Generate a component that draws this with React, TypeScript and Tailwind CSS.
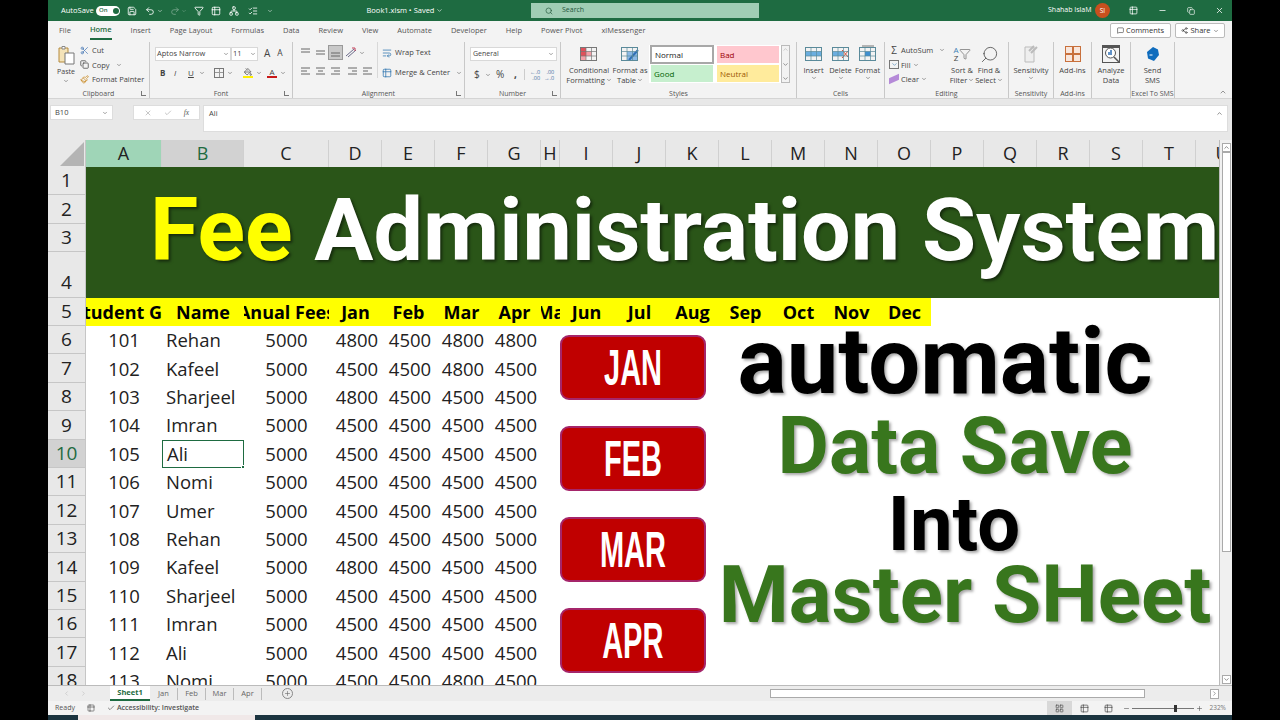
import { ReactNode } from 'react';
import {
  ChevronDown, ChevronLeft, ChevronRight, ChevronUp, Check, Copy, Filter, LayoutGrid, ListChecks, MessageSquare,
  Minus, Network, PaintBucket, Paintbrush, Plus, Redo2, Save, Scissors, Search, Share2, Table2, Undo2, WrapText, X,
} from 'lucide-react';

const columns = [
  ['A', 'w-[76px]'], ['B', 'w-[82px]'], ['C', 'w-[85px]'], ['D', 'w-[53px]'], ['E', 'w-[53px]'], ['F', 'w-[53px]'],
  ['G', 'w-[53px]'], ['H', 'w-[19px]'], ['I', 'w-[53px]'], ['J', 'w-[53px]'], ['K', 'w-[53px]'], ['L', 'w-[53px]'],
  ['M', 'w-[53px]'], ['N', 'w-[53px]'], ['O', 'w-[53px]'], ['P', 'w-[53px]'], ['Q', 'w-[53px]'], ['R', 'w-[53px]'],
  ['S', 'w-[53px]'], ['T', 'w-[53px]'], ['U', 'w-[53px]'],
];

const headings = [
  ['Name', 'w-[82px]'], ['Anual Fees', 'w-[85px]'], ['Jan', 'w-[53px]'], ['Feb', 'w-[53px]'],
  ['Mar', 'w-[53px]'], ['Apr', 'w-[53px]'], ['Ma', 'w-[19px]'], ['Jun', 'w-[53px]'], ['Jul', 'w-[53px]'], ['Aug', 'w-[53px]'],
  ['Sep', 'w-[53px]'], ['Oct', 'w-[53px]'], ['Nov', 'w-[53px]'], ['Dec', 'w-[53px]'],
];

const students: [number, string, number[]][] = [
  [101, 'Rehan', [4800, 4500, 4800, 4800]],
  [102, 'Kafeel', [4500, 4500, 4800, 4500]],
  [103, 'Sharjeel', [4800, 4500, 4500, 4500]],
  [104, 'Imran', [4500, 4500, 4500, 4500]],
  [105, 'Ali', [4500, 4500, 4500, 4500]],
  [106, 'Nomi', [4500, 4500, 4500, 4500]],
  [107, 'Umer', [4500, 4500, 4500, 4500]],
  [108, 'Rehan', [4500, 4500, 4500, 5000]],
  [109, 'Kafeel', [4800, 4500, 4500, 4500]],
  [110, 'Sharjeel', [4500, 4500, 4500, 4500]],
  [111, 'Imran', [4500, 4500, 4500, 4500]],
  [112, 'Ali', [4500, 4500, 4500, 4500]],
  [113, 'Nomi', [4500, 4500, 4800, 4500]],
];

const tabs = ['File', 'Home', 'Insert', 'Page Layout', 'Formulas', 'Data', 'Review', 'View', 'Automate', 'Developer', 'Help', 'Power Pivot', 'xlMessenger'];

// Three stacked lines, the way Excel draws its alignment buttons
const Lines = ({ rows }: { rows: [number, number, number][] }) => (
  <svg width="11" height="11" viewBox="0 0 11 11" stroke="#666" strokeWidth="1">
    {rows.map(([x1, x2, y]) => <line key={y} x1={x1} x2={x2} y1={y} y2={y} />)}
  </svg>
);

// Small spreadsheet grid used by the ribbon's big buttons
const GridIcon = ({ children, stroke = '#777' }: { children?: ReactNode; stroke?: string }) => (
  <svg width="20" height="18" viewBox="0 0 20 18" fill="none">
    {children}
    <rect x="1.5" y="2.5" width="16" height="13" stroke={stroke} />
    <path d="M1.5 6.5h16M1.5 11h16M7 2.5v13M12.5 2.5v13" stroke={stroke} strokeWidth="0.7" />
  </svg>
);

const Group = ({ label, width, launcher, children }: { label: string; width: string; launcher?: boolean; children: ReactNode }) => (
  <div className={`${width} h-[56px] shrink-0 flex flex-col border-r border-[#c8c8c8]`}>
    <div className="h-[47px] flex">{children}</div>
    <div className="h-[9px] flex items-center relative">
      <span className="flex-1 text-center text-[7px] leading-none text-[#555] whitespace-nowrap">{label}</span>
      {launcher && <span className="absolute right-[3px] top-[2px] w-[5px] h-[5px] border-l border-b border-[#777]" />}
    </div>
  </div>
);

const Big = ({ icon, lines }: { icon: ReactNode; lines: string[] }) => (
  <div className="flex flex-col items-center flex-1 text-[7.5px] leading-[10px] text-[#444]">
    <div className="h-[22px] flex items-center justify-center">{icon}</div>
    {lines.map((l) => <span key={l} className="whitespace-nowrap flex items-center gap-[1px]">{l === 'v' ? <ChevronDown size={6} /> : l.endsWith(' v') ? <>{l.slice(0, -2)} <ChevronDown size={6} /></> : l}</span>)}
  </div>
);

const Cell = ({ className, children }: { className: string; children: ReactNode }) => (
  <div className={`${className} shrink-0 h-full flex items-center justify-center overflow-hidden whitespace-nowrap`}>{children}</div>
);

const RowNum = ({ n, active }: { n: number; active?: boolean }) => (
  <div className={`w-[38px] shrink-0 h-full flex items-center justify-center border-b border-r border-[#c6c6c6] text-[19px] ${active ? 'bg-[#d2d2d2] text-[#1f6b41]' : 'bg-[#e8e8e8] text-[#222]'}`}>{n}</div>
);

const MonthButton = ({ label }: { label: string }) => (
  <div className="w-[146px] h-[65px] rounded-[9px] bg-[#c00000] border-2 border-[#a5256a] flex items-center justify-center">
    <span className="font-['Liberation_Sans',sans-serif] font-bold text-white text-[50px] leading-none scale-x-[0.58]">{label}</span>
  </div>
);

export default function App() {
  return (
    <div className="w-[1280px] h-[720px] overflow-hidden bg-black flex font-['Open_Sans',sans-serif]">
      <div className="w-[48px] shrink-0" />
      <div className="w-[1184px] shrink-0 flex flex-col">
        {/* Title bar */}
        <div className="h-[21px] shrink-0 bg-[#1e6b41] flex items-center text-white text-[7.5px]">
          <span className="ml-[13px] w-[32px] whitespace-nowrap">AutoSave</span>
          <span className="ml-[3px] w-[24px] h-[10px] rounded-full bg-white text-[#1e6b41] text-[6px] font-semibold flex items-center justify-between pl-[3px] pr-[1px]">On<span className="w-[6px] h-[6px] rounded-full bg-[#1e6b41]" /></span>
          <Save size={10} className="ml-[7px]" />
          <Undo2 size={10} className="ml-[8px]" />
          <ChevronDown size={6} className="ml-[2px]" />
          <Redo2 size={10} className="ml-[7px] opacity-40" />
          <ChevronDown size={6} className="ml-[1px] opacity-40" />
          <Filter size={10} className="ml-[7px]" />
          <Table2 size={10} className="ml-[7px]" />
          <Network size={10} className="ml-[8px]" />
          <ListChecks size={10} className="ml-[9px]" />
          <ChevronDown size={6} className="ml-[9px]" />
          <span className="ml-[82px] w-[100px] shrink-0 text-center whitespace-nowrap flex items-center justify-center gap-[2px]">Book1.xlsm • Saved <ChevronDown size={7} /></span>
          <div className="ml-[76px] w-[228px] shrink-0 h-[15px] bg-[#a0cdb4] text-[#23573b] flex items-center pl-[14px] gap-[9px] text-[7px]">
            <Search size={8} /> Search
          </div>
          <span className="ml-[289px] w-[42px] shrink-0 whitespace-nowrap text-[7px]">Shahab IslaM</span>
          <span className="ml-[5px] w-[15px] h-[15px] shrink-0 rounded-full bg-[#c8501e] flex items-center justify-center text-[6.5px]">SI</span>
          <div className="ml-[19px] flex items-center gap-[20px]">
            <Table2 size={9} />
            <Minus size={9} />
            <Copy size={8} />
            <X size={9} />
          </div>
        </div>

        {/* Ribbon tabs */}
        <div className="h-[19px] shrink-0 bg-[#f3f3f3] flex items-center text-[7.5px] text-[#555] pl-[11px] gap-[19px]">
          {tabs.map((t) => (
            <span key={t} className={`whitespace-nowrap h-full flex items-center ${t === 'Home' ? 'text-[#1e6b41] font-semibold border-b-2 border-[#1e6b41]' : ''}`}>{t}</span>
          ))}
          <div className="ml-auto mr-[7px] flex items-center gap-[4px] text-[#333]">
            <span className="w-[61px] h-[15px] bg-white border border-[#bbb] rounded-[2px] flex items-center justify-center gap-[2px]"><MessageSquare size={7} /> Comments</span>
            <span className="w-[50px] h-[15px] bg-white border border-[#bbb] rounded-[2px] flex items-center justify-center gap-[2px]"><Share2 size={7} /> Share <ChevronDown size={6} /></span>
          </div>
        </div>

        {/* Ribbon */}
        <div className="h-[59px] shrink-0 bg-[#f3f3f3] flex pt-[2px] text-[#444] border-b border-[#d4d4d4]">
          <Group label="Clipboard" width="w-[102px]" launcher>
            <div className="w-[30px] pl-[6px] flex flex-col items-center text-[7px] leading-[9px] pt-[3px]">
              <svg width="18" height="20" viewBox="0 0 18 20" fill="none">
                <path d="M2 3h9v14H2z" fill="#f4e3b8" stroke="#b58a3c" />
                <path d="M5 1.5h3v2.5H5z" fill="#fff" stroke="#888" />
                <path d="M8 8h9v11H8z" fill="#fff" stroke="#777" />
              </svg>
              <span className="mt-[2px]">Paste</span>
              <ChevronDown size={6} className="mt-[2px]" />
            </div>
            <div className="ml-[2px] flex flex-col text-[7.5px] leading-[14.5px] pt-[1px]">
              <span className="flex items-center gap-[3px]"><Scissors size={9} className="text-[#4a7ab5]" /> Cut</span>
              <span className="flex items-center gap-[3px]"><Copy size={9} /> Copy <ChevronDown size={6} className="ml-[3px]" /></span>
              <span className="flex items-center gap-[3px] whitespace-nowrap"><Paintbrush size={9} className="text-[#c8871e]" /> Format Painter</span>
            </div>
          </Group>

          <Group label="Font" width="w-[143px]" launcher>
            <div className="pl-[5px] flex flex-col gap-[6px] pt-[5px] text-[7.5px]">
              <div className="flex items-center h-[13px]">
                <span className="w-[76px] h-[14px] bg-white border border-[#d8d8d8] flex items-center justify-between px-[1px] whitespace-nowrap">Aptos Narrow <ChevronDown size={6} /></span>
                <span className="w-[27px] h-[14px] bg-white border border-[#d8d8d8] flex items-center justify-between px-[1px]">11 <ChevronDown size={6} /></span>
                <span className="ml-[6px] text-[10px]">A</span>
                <span className="ml-[7px] text-[8.5px]">A</span>
              </div>
              <div className="flex items-center h-[13px] text-[8px]">
                <b className="ml-[5px] w-[7px]">B</b>
                <i className="ml-[7px] w-[7px]">I</i>
                <u className="ml-[7px] w-[7px]">U</u>
                <ChevronDown size={6} className="ml-[4px]" />
                <span className="ml-[9px] w-[10px] h-[10px] border border-[#777] relative">
                  <span className="absolute left-[3.5px] top-0 bottom-0 w-[1px] bg-[#999]" />
                  <span className="absolute top-[3.5px] left-0 right-0 h-[1px] bg-[#999]" />
                </span>
                <ChevronDown size={6} className="ml-[3px]" />
                <span className="ml-[10px] flex flex-col items-center"><PaintBucket size={8} /><span className="w-[10px] h-[2px] bg-[#ffef00]" /></span>
                <ChevronDown size={6} className="ml-[3px]" />
                <span className="ml-[5px] w-[10px] flex flex-col items-center leading-[8px]">A<span className="w-[10px] h-[2px] bg-[#c81818]" /></span>
                <ChevronDown size={6} className="ml-[3px]" />
              </div>
            </div>
          </Group>

          <Group label="Alignment" width="w-[172px]" launcher>
            <div className="w-[85px] pl-[5px] flex flex-col gap-[5px] pt-[3px] border-r border-[#d8d8d8] h-[36px]">
              <div className="flex items-center h-[15px]">
                <span className="w-[15px] flex justify-center"><Lines rows={[[1, 10, 2], [1, 10, 5]]} /></span>
                <span className="w-[15px] flex justify-center"><Lines rows={[[1, 10, 4], [1, 10, 7]]} /></span>
                <span className="w-[15px] h-[15px] bg-[#c8c8c8] border border-[#999] flex items-center justify-center"><Lines rows={[[1, 10, 6], [1, 10, 9]]} /></span>
                <span className="ml-[2px] flex items-center gap-[2px]">
                  <svg width="12" height="11" viewBox="0 0 12 11" fill="none" stroke="#6b6b8a"><path d="M1 9 9 2M3 10l8-7" /><path d="M7 1h3v3" stroke="#c2405a" /></svg>
                  <ChevronDown size={6} />
                </span>
              </div>
              <div className="flex items-center h-[15px]">
                <span className="w-[15px] flex justify-center"><Lines rows={[[1, 10, 2], [1, 7, 5], [1, 10, 8]]} /></span>
                <span className="w-[15px] flex justify-center"><Lines rows={[[1, 10, 2], [3, 8, 5], [1, 10, 8]]} /></span>
                <span className="w-[15px] flex justify-center"><Lines rows={[[1, 10, 2], [4, 10, 5], [1, 10, 8]]} /></span>
                <span className="ml-[2px] w-[15px] flex justify-center"><Lines rows={[[1, 10, 2], [5, 10, 5], [1, 10, 8]]} /></span>
                <span className="w-[15px] flex justify-center"><Lines rows={[[1, 10, 2], [1, 6, 5], [1, 10, 8]]} /></span>
              </div>
            </div>
            <div className="pl-[4px] flex flex-col gap-[5px] pt-[3px] text-[7.5px] whitespace-nowrap">
              <span className="h-[15px] flex items-center gap-[3px]"><WrapText size={10} className="text-[#3f7fb5]" /> Wrap Text</span>
              <span className="h-[15px] flex items-center gap-[3px]"><Table2 size={10} className="text-[#3f7fb5]" /> Merge &amp; Center <ChevronDown size={6} className="ml-[3px]" /></span>
            </div>
          </Group>

          <Group label="Number" width="w-[96px]" launcher>
            <div className="pl-[5px] flex flex-col gap-[7px] pt-[5px] text-[10px]">
              <span className="w-[87px] h-[14px] bg-white border border-[#d8d8d8] flex items-center justify-between px-[2px] text-[7px]">General <ChevronDown size={6} /></span>
              <div className="flex items-center h-[13px]">
                <span className="ml-[4px] w-[7px]">$</span>
                <ChevronDown size={6} className="ml-[4px]" />
                <span className="ml-[5px] w-[12px]">%</span>
                <b className="ml-[6px] w-[4px]">,</b>
                <span className="ml-[6px] h-[11px] w-[1px] bg-[#ccc]" />
                <span className="ml-[5px] text-[5.5px] leading-[6px] text-[#3f6f9f] text-right">←.0<br />.00</span>
                <span className="ml-[4px] text-[5.5px] leading-[6px] text-[#3f6f9f] text-right">.00<br />→.0</span>
              </div>
            </div>
          </Group>

          <Group label="Styles" width="w-[236px]">
            <div className="ml-[6px] w-[44px] pt-[1px]">
              <Big lines={['Conditional', 'Formatting v']} icon={<GridIcon><rect x="2" y="3" width="5" height="8" fill="#e0505a" /><rect x="7" y="6.5" width="5.5" height="4.5" fill="#f4a0a8" /><rect x="2" y="11" width="5" height="4" fill="#f4a0a8" /></GridIcon>} />
            </div>
            <div className="w-[38px] pt-[1px]">
              <Big lines={['Format as', 'Table v']} icon={<GridIcon stroke="#5a8a9a"><rect x="7" y="6.5" width="11" height="9" fill="#8ab8e6" /><path d="M9 15 18 5" stroke="#2f6fb5" strokeWidth="2" /></GridIcon>} />
            </div>
            <div className="w-[141px] h-[38px] mt-[3px] bg-white grid grid-cols-[66px_66px_9px] grid-rows-2 text-[8px] leading-none">
              <span className="mx-[1px] border-2 border-[#a8a8a8] flex items-center pl-[3px] text-[#222]">Normal</span>
              <span className="mx-[2px] my-[1px] bg-[#ffc7ce] text-[#9c0006] flex items-center pl-[3px]">Bad</span>
              <span className="row-span-2 border border-[#bbb] bg-[#f3f3f3] flex flex-col items-center justify-between text-[#555]"><ChevronUp size={7} className="opacity-40" /><ChevronDown size={7} /><ChevronDown size={7} /></span>
              <span className="mx-[2px] my-[1px] bg-[#c6efce] text-[#006100] flex items-center pl-[3px]">Good</span>
              <span className="mx-[2px] my-[1px] bg-[#ffeb9c] text-[#9c5700] flex items-center pl-[3px]">Neutral</span>
            </div>
          </Group>

          <Group label="Cells" width="w-[88px]">
            <div className="ml-[3px] w-[27px] pt-[1px]">
              <Big lines={['Insert', 'v']} icon={<GridIcon stroke="#5a8a9a"><rect x="2" y="6.5" width="15" height="4.5" fill="#6aaee0" /></GridIcon>} />
            </div>
            <div className="w-[27px] pt-[1px]">
              <Big lines={['Delete', 'v']} icon={<GridIcon stroke="#5a8a9a"><rect x="2" y="6.5" width="10" height="4.5" fill="#6aaee0" /><path d="m11 5 7 8m0-8-7 8" stroke="#d0503c" /></GridIcon>} />
            </div>
            <div className="w-[27px] pt-[1px]">
              <Big lines={['Format', 'v']} icon={<GridIcon stroke="#5a8a9a"><rect x="7" y="6.5" width="5.5" height="4.5" fill="#3f8fd0" /><path d="M4 1h12" stroke="#777" /></GridIcon>} />
            </div>
          </Group>

          <Group label="Editing" width="w-[124px]">
            <div className="pl-[4px] w-[61px] flex flex-col text-[7.5px] leading-[14.5px] pt-[1px] whitespace-nowrap">
              <span className="flex items-center gap-[2px]"><span className="w-[10px] text-center text-[10px] leading-none">Σ</span> AutoSum <ChevronDown size={6} className="ml-[4px]" /></span>
              <span className="flex items-center gap-[2px]"><span className="w-[10px] h-[9px] border border-[#777] flex items-center justify-center text-[#3f7fb5]"><ChevronDown size={7} /></span> Fill <ChevronDown size={6} /></span>
              <span className="flex items-center gap-[2px]"><span className="w-[10px] h-[6px] bg-[#b58ad8] -skew-y-[25deg]" /> Clear <ChevronDown size={6} /></span>
            </div>
            <div className="w-[32px] pt-[1px]">
              <Big lines={['Sort &', 'Filter v']} icon={
                <span className="flex items-center">
                  <span className="flex flex-col text-[8px] leading-[8px] items-center"><span className="text-[#3f7fb5]">A</span><span>Z</span></span>
                  <Filter size={12} strokeWidth={1.1} />
                </span>
              } />
            </div>
            <div className="w-[22px] pt-[1px]">
              <Big lines={['Find &', 'Select v']} icon={<Search size={19} strokeWidth={1} className="-scale-x-100" />} />
            </div>
          </Group>

          <Group label="Sensitivity" width="w-[45px]">
            <div className="flex-1 pt-[1px]">
              <Big lines={['Sensitivity', 'v']} icon={
                <svg width="18" height="20" viewBox="0 0 18 20" fill="none" stroke="#bbb"><path d="M3 3h9v15H3z" fill="#eee" /><path d="m9 9 6-6M7 7l5-5" strokeWidth="2" /></svg>
              } />
            </div>
          </Group>
          <Group label="Add-ins" width="w-[38px]">
            <div className="flex-1 pt-[1px]">
              <Big lines={['Add-ins']} icon={
                <svg width="18" height="18" viewBox="0 0 18 18" fill="#f8e6dc" stroke="#c8703c"><rect x="1.5" y="1.5" width="7" height="7" /><rect x="9.5" y="1.5" width="7" height="7" /><rect x="1.5" y="9.5" width="7" height="7" /><rect x="9.5" y="9.5" width="7" height="7" /></svg>
              } />
            </div>
          </Group>
          <Group label="" width="w-[39px]">
            <div className="flex-1 pt-[1px]">
              <Big lines={['Analyze', 'Data']} icon={
                <svg width="20" height="20" viewBox="0 0 20 20" fill="none" stroke="#555"><rect x="1.5" y="1.5" width="17" height="17" /><path d="M1.5 3h17" strokeWidth="2" /><circle cx="9.5" cy="9" r="5" fill="#fff" /><path d="m13 13 5 5" strokeWidth="1.5" /><path d="M8 11V8M10 11V6" stroke="#2f6fb5" strokeWidth="1.5" /></svg>
              } />
            </div>
          </Group>
          <Group label="Excel To SMS" width="w-[44px]">
            <div className="flex-1 pt-[1px]">
              <Big lines={['Send', 'SMS']} icon={
                <svg width="12" height="14" viewBox="0 0 12 14"><path d="M6 0 11 2.5 12 8 7 14 1 11.5 0 5z" fill="#0f6cbd" /><path d="M2.5 8h3" stroke="#fff" /></svg>
              } />
            </div>
          </Group>
          <ChevronUp size={8} className="ml-auto mr-[5px] mt-[46px] text-[#666]" />
        </div>

        {/* Formula bar */}
        <div className="h-[41px] shrink-0 bg-[#e8e8e8] flex items-start pt-[6px] text-[7.5px] text-[#444]">
          <span className="ml-[2px] w-[63px] h-[15px] bg-white border border-[#ddd] flex items-center justify-between px-[4px]">B10 <ChevronDown size={6} /></span>
          <span className="ml-[20px] w-[67px] h-[15px] bg-white border border-[#ddd] flex items-center justify-around px-[4px] text-[#aaa]"><X size={8} /><Check size={8} /><i className="font-['Liberation_Serif',serif] text-[#555]">fx</i></span>
          <span className="ml-[3px] flex-1 mr-[4px] h-[27px] bg-white border border-[#ddd] flex justify-between pl-[5px] pr-[4px] pt-[2px]">Ali <ChevronUp size={7} className="mt-[2px]" /></span>
        </div>

        {/* Sheet */}
        <div className="h-[545px] shrink-0 flex bg-white">
          <div className="w-[1171px] shrink-0 flex flex-col text-[18.5px] text-[#222] relative overflow-hidden">
            <div className="h-[27px] shrink-0 flex bg-[#e8e8e8] text-[18px]">
              <div className="w-[38px] shrink-0 h-full flex items-end justify-end border-r border-[#c6c6c6] pr-[1px] pb-[1px]">
                <span className="w-[24px] h-[24px] bg-[#b4b4b4] [clip-path:polygon(100%_0,100%_100%,0_100%)]" />
              </div>
              {columns.map(([c, w]) => (
                <Cell key={c} className={`${w} border-r border-[#d0d0d0] ${c === 'A' ? 'bg-[#9fd5b7]' : c === 'B' ? 'bg-[#d2d2d2] text-[#1f6b41]' : ''}`}>{c}</Cell>
              ))}
            </div>

            <div className="flex h-[131px] shrink-0">
              <div className="w-[38px] shrink-0 flex flex-col">
                <div className="h-[28px]"><RowNum n={1} /></div>
                <div className="h-[29px]"><RowNum n={2} /></div>
                <div className="h-[28px]"><RowNum n={3} /></div>
                <div className="h-[46px] [&>div]:items-end [&>div]:pb-[1px]"><RowNum n={4} /></div>
              </div>
              <div className="flex-1 bg-[#2a5518] flex items-center pl-[64px] pb-[5px] font-['Roboto',sans-serif] font-bold text-[88px] leading-none whitespace-nowrap text-white [text-shadow:2px_2px_3px_rgba(0,0,0,0.5)]">
                <span className="text-[#ffff00]">Fee</span>&nbsp;Administration System
              </div>
            </div>

            <div className="flex h-[28px] shrink-0">
              <RowNum n={5} />
              <div className="flex h-full bg-[#ffff00] font-bold text-black text-[18px]">
                <Cell className="w-[76px] !justify-end">Student G</Cell>
                {headings.map(([h, w]) => <Cell key={h} className={w}>{h}</Cell>)}
              </div>
            </div>

            {students.map(([id, name, marks], i) => (
              <div key={id} className="flex h-[28.4px] shrink-0">
                <RowNum n={i + 6} active={i === 4} />
                <Cell className="w-[76px]">{id}</Cell>
                <div className={`w-[82px] shrink-0 h-full flex items-center pl-[4px] relative ${i === 4 ? 'border-[1.5px] border-[#1e6b41]' : ''}`}>
                  {name}
                  {i === 4 && <span className="absolute -right-[2px] -bottom-[2px] w-[4px] h-[4px] bg-[#1e6b41] border border-white" />}
                </div>
                <Cell className="w-[85px]">5000</Cell>
                {marks.map((m, j) => <Cell key={j} className="w-[53px] pl-[3px]">{m}</Cell>)}
              </div>
            ))}

            {/* Shapes floating over the sheet */}
            <div className="absolute left-[512px] top-[195px] flex flex-col gap-[26px]">
              {['JAN', 'FEB', 'MAR', 'APR'].map((m) => <MonthButton key={m} label={m} />)}
            </div>
            <div className="absolute left-[660px] top-[182px] w-[510px] flex flex-col items-center font-['Roboto',sans-serif] font-bold whitespace-nowrap [text-shadow:2px_2px_3px_rgba(0,0,0,0.35)]">
              <span className="h-[84px] leading-[80px] text-[92px] text-black pr-[36px]">automatic</span>
              <span className="h-[80px] leading-[80px] text-[79px] text-[#38761d] pr-[16px]">Data Save</span>
              <span className="h-[73px] leading-[77px] text-[76px] text-black pr-[18px]">Into</span>
              <span className="leading-[72px] text-[80px] text-[#38761d] pl-[4px]">Master SHeet</span>
            </div>
          </div>

          {/* Vertical scrollbar */}
          <div className="w-[13px] shrink-0 bg-[#f0f0f0] border-l border-[#bbb] flex flex-col items-center text-[#444] pt-[3px] pb-[1px]">
            <span className="w-[9px] h-[9px] bg-white border border-[#aaa] flex items-center justify-center"><ChevronUp size={7} /></span>
            <div className="w-[9px] h-[400px] bg-white border border-[#aaa]" />
            <span className="mt-auto w-[9px] h-[9px] bg-white border border-[#aaa] flex items-center justify-center"><ChevronDown size={7} /></span>
          </div>
        </div>

        {/* Sheet tabs */}
        <div className="h-[16px] shrink-0 bg-[#ececec] border-t border-[#bbb] flex items-center text-[7.5px] text-[#666]">
          <ChevronLeft size={7} className="ml-[15px] text-[#bbb]" />
          <ChevronRight size={7} className="ml-[10px] text-[#bbb]" />
          <span className="ml-[23px] w-[40px] h-full bg-white text-[#1e6b41] font-bold border-b-2 border-[#1e6b41] flex items-center justify-center">Sheet1</span>
          {['Jan', 'Feb', 'Mar', 'Apr'].map((s) => (
            <span key={s} className="w-[28px] h-[12px] border-r border-[#bbb] flex items-center justify-center">{s}</span>
          ))}
          <span className="ml-[20px] w-[11px] h-[11px] rounded-full border border-[#888] flex items-center justify-center"><Plus size={7} /></span>
          <span className="ml-[477px] w-[375px] h-[9px] bg-white border border-[#aaa]" />
          <span className="ml-[65px] w-[9px] h-[10px] bg-white border border-[#aaa] flex items-center justify-center"><ChevronRight size={7} /></span>
        </div>

        {/* Status bar */}
        <div className="h-[14px] shrink-0 bg-[#f3f3f3] flex items-center text-[7px] text-[#555]">
          <span className="ml-[7px]">Ready</span>
          <Table2 size={8} className="ml-[12px]" />
          <span className="ml-[12px] flex items-center gap-[2px] whitespace-nowrap font-semibold"><Check size={8} /> Accessibility: Investigate</span>
          <span className="ml-auto w-[25px] h-full bg-[#d8d8d8] flex items-center justify-center"><LayoutGrid size={9} /></span>
          <Table2 size={9} className="ml-[8px]" />
          <Table2 size={9} className="ml-[15px]" />
          <Minus size={7} className="ml-[10px]" />
          <span className="ml-[2px] w-[62px] h-[1px] bg-[#777] flex justify-end"><span className="w-[3px] h-[7px] -mt-[3px] mr-[17px] bg-[#333]" /></span>
          <Plus size={7} className="ml-[2px]" />
          <span className="ml-[6px] mr-[6px] text-[#777] text-[6.5px]">232%</span>
        </div>

        {/* Strip of the desktop below the window */}
        <div className="h-[5px] shrink-0 bg-[#1c3540] flex">
          <span className="ml-[30px] w-[177px] bg-[#f0e8e8]" />
        </div>
      </div>
      <div className="w-[48px] shrink-0" />
    </div>
  );
}
